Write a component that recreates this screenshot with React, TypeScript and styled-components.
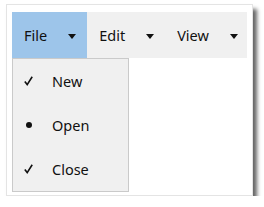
import React from 'react'
import styled, { createGlobalStyle } from 'styled-components'

const GlobalStyle = createGlobalStyle`
  html, body {
    margin: 0;
    padding: 0;
    background: #ffffff;
  }
  body {
    font-family: 'Noto Sans', 'Open Sans', sans-serif;
    color: #111;
  }
`

const Window = styled.div`
  position: relative;
  box-sizing: border-box;
  width: 247px;
  height: 192px;
  margin: 4px 0 0 6px;
  padding: 7px 5px 0 5px;
  background: #ffffff;
  border: 1px solid #e4e4e4;
  box-shadow: 4px 5px 4px rgba(0, 0, 0, 0.6);
`

const MenuBar = styled.div`
  display: flex;
  height: 46px;
  background: #f0f0f0;
`

const MenuItem = styled.div<{ $open?: boolean }>`
  display: flex;
  align-items: center;
  gap: 21px;
  padding: 0 11px 0 12px;
  background: ${(p) => (p.$open ? '#9dc5ea' : 'transparent')};
  font-size: 14.5px;
  line-height: 1;
`

const Arrow = styled.span`
  width: 0;
  height: 0;
  border-left: 4px solid transparent;
  border-right: 4px solid transparent;
  border-top: 5px solid #111;
  margin-top: 2px;
`

const Dropdown = styled.div`
  position: absolute;
  left: 5px;
  top: 53px;
  box-sizing: border-box;
  width: 117px;
  background: #f0f0f0;
  border: 1px solid #cacaca;
  display: flex;
  flex-direction: column;
`

const Item = styled.div`
  display: flex;
  align-items: center;
  height: 44px;
  font-size: 14.5px;
`

const Mark = styled.span`
  width: 39px;
  display: flex;
  justify-content: center;
  padding-right: 8px;
  box-sizing: border-box;
`

const Bullet = styled.span`
  width: 6px;
  height: 6px;
  border-radius: 50%;
  background: #111;
`

function Check() {
  return (
    <svg width="9" height="10" viewBox="0 0 9 10">
      <path d="M0.8 5.6 L3.2 8.6 L8.2 0.8" fill="none" stroke="#111" strokeWidth="1.6" />
    </svg>
  )
}

const menus = ['File', 'Edit', 'View']
const items: { label: string; mark: 'check' | 'bullet' }[] = [
  { label: 'New', mark: 'check' },
  { label: 'Open', mark: 'bullet' },
  { label: 'Close', mark: 'check' },
]

export default function App() {
  return (
    <>
      <GlobalStyle />
      <Window>
        <MenuBar>
          {menus.map((m, i) => (
            <MenuItem key={m} $open={i === 0}>
              <span>{m}</span>
              <Arrow />
            </MenuItem>
          ))}
        </MenuBar>
        <Dropdown>
          {items.map((it) => (
            <Item key={it.label}>
              <Mark>{it.mark === 'check' ? <Check /> : <Bullet />}</Mark>
              <span>{it.label}</span>
            </Item>
          ))}
        </Dropdown>
      </Window>
    </>
  )
}
